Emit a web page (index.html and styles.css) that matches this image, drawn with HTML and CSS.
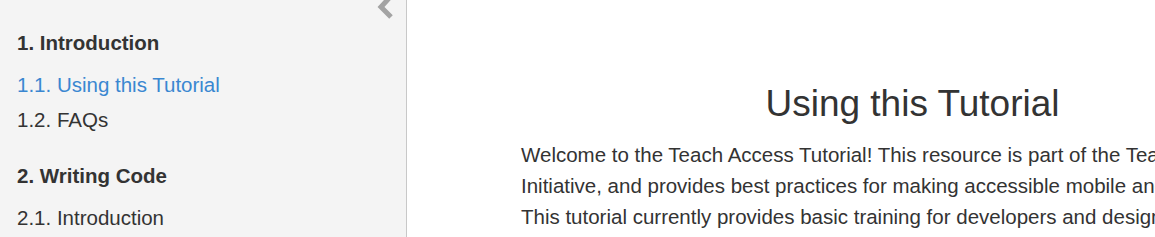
FILE: index.html
```html
<!DOCTYPE html>
<html lang="en">
<head>
  <meta charset="UTF-8" />
  <meta name="viewport" content="width=device-width, initial-scale=1" />
  <title>Using this Tutorial</title>
  <link rel="stylesheet" href="styles.css">
</head>
<body>
  <div class="book">
    <nav class="summary">
      <!-- toggle sidebar -->
      <button class="toggle-btn" type="button" aria-label="Hide sidebar">
        <svg class="toggle-icon" viewBox="0 0 20 24" aria-hidden="true" focusable="false">
          <polyline points="13,-4 3,7 13,17" />
        </svg>
      </button>
      <ul class="chapter">
        <li class="chapter-header">1. Introduction</li>
        <li class="chapter-item active">1.1. Using this Tutorial</li>
        <li class="chapter-item">1.2. FAQs</li>
      </ul>
      <ul class="chapter">
        <li class="chapter-header">2. Writing Code</li>
        <li class="chapter-item">2.1. Introduction</li>
      </ul>
    </nav>
    <main class="body">
      <section class="page">
        <h1 class="page-title">Using this Tutorial</h1>
        <p class="page-text">Welcome to the Teach Access Tutorial! This resource is part of the Teach Access Initiative, and provides best practices for making accessible mobile and web applications. This tutorial currently provides basic training for developers and designers on the fundamentals of accessibility.</p>
      </section>
    </main>
  </div>
</body>
</html>
```

FILE: styles.css
```css
html, body {
  margin: 0;
  padding: 0;
  width: 100vw;
  height: 100vh;
  overflow: hidden;
  font-family: "Liberation Sans", Arial, sans-serif;
  color: #333;
}
.book {
  display: flex;
  height: 100%;
}
.summary {
  position: relative;
  flex: 0 0 407px;
  background: #f4f4f4;
  border-right: 1px solid #c8c8c8;
  padding: 25px 0 0 17px;
  box-sizing: border-box;
  display: flex;
  flex-direction: column;
  gap: 21px;
}
.toggle-btn {
  position: absolute;
  top: 0;
  right: 8px;
  width: 20px;
  height: 20px;
  padding: 0;
  border: none;
  background: none;
  cursor: pointer;
}
.toggle-icon {
  display: block;
  width: 20px;
  height: 24px;
  fill: none;
  stroke: #a3a3a3;
  stroke-width: 5;
  overflow: visible;
}
.chapter {
  list-style: none;
  margin: 0;
  padding: 0;
}
.chapter-header {
  font-size: 20.5px;
  font-weight: 700;
  line-height: 35px;
  margin-bottom: 7px;
}
.chapter-item {
  font-size: 20.5px;
  line-height: 35px;
}
.chapter-item.active {
  color: #3a87d1;
}
.body {
  flex: 1;
  background: #fff;
  padding: 82px 0 0 114px;
}
.page {
  width: 783px;
}
.page-title {
  margin: 0 0 13px 0;
  font-size: 37px;
  font-weight: 400;
  line-height: 1.2;
  text-align: center;
}
/* the text column runs a little past the title's box */
.page-text {
  margin: 0 -27px 0 0;
  font-size: 20.5px;
  line-height: 31px;
}
```
